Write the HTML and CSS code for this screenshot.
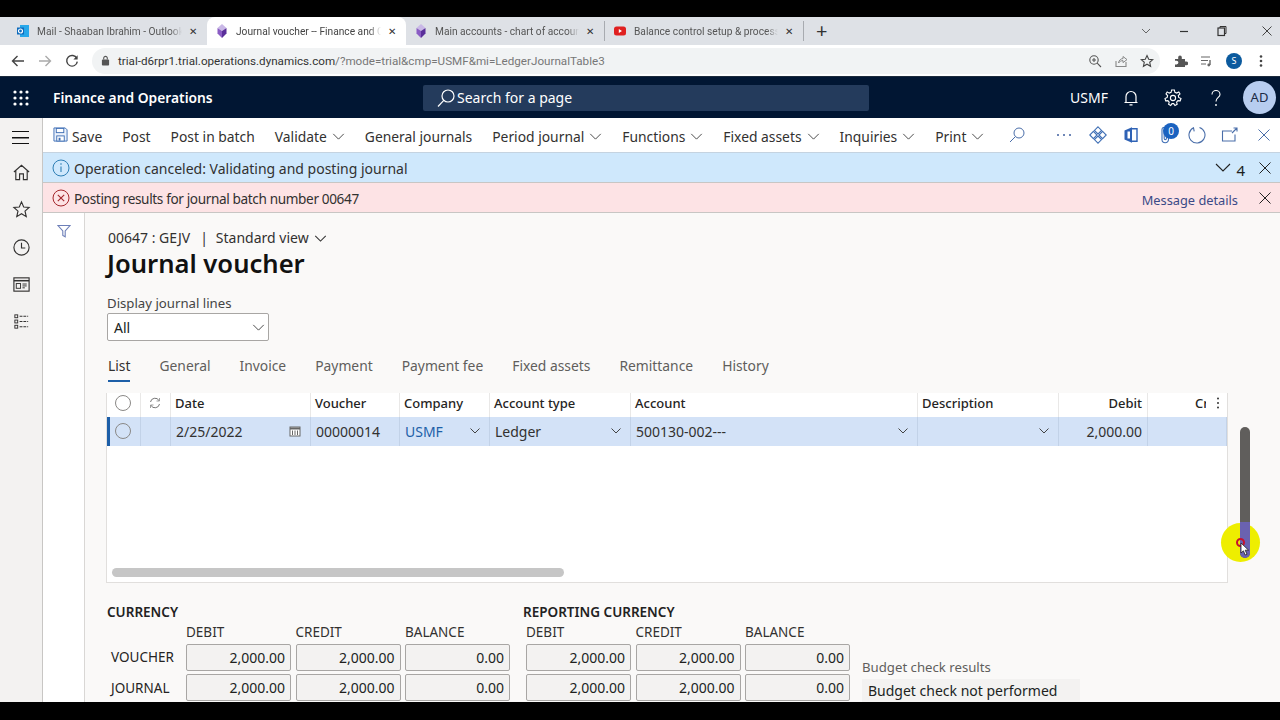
FILE: index.html
```html
<!DOCTYPE html>
<html lang="en">
  <head>
    <meta charset="UTF-8" />
    <title>Journal voucher -- Finance and Operations</title>
    <link rel="stylesheet" href="styles.css">
  </head>
  <body>
    <div class="screen">
      <div class="tabs">
        <div class="tab">
          <svg class="fav" viewBox="0 0 14 14"><rect x="4" y="1" width="9" height="12" fill="#28a8ea"/><rect x="1" y="3.5" width="7" height="7" fill="#0f6cbd"/><circle cx="4.5" cy="7" r="2" fill="none" stroke="#fff" stroke-width="1.2"/></svg>
          <span class="tab-text">Mail - Shaaban Ibrahim - Outlook</span>
          <span class="tab-x">✕</span>
        </div>
        <div class="tab active">
          <svg class="fav" viewBox="0 0 14 14"><path d="M7 0 11.5 4 7 7 2.5 4Z" fill="#c9b8e6"/><path d="M2.5 4 7 7 7 14 2.5 9.5Z" fill="#8a5cc4"/><path d="M11.5 4 7 7 7 14 11.5 9.5Z" fill="#5a2f9a"/></svg>
          <span class="tab-text">Journal voucher -- Finance and Operations</span>
          <span class="tab-x">✕</span>
        </div>
        <div class="tab">
          <svg class="fav" viewBox="0 0 14 14"><path d="M7 0 11.5 4 7 7 2.5 4Z" fill="#c9b8e6"/><path d="M2.5 4 7 7 7 14 2.5 9.5Z" fill="#8a5cc4"/><path d="M11.5 4 7 7 7 14 11.5 9.5Z" fill="#5a2f9a"/></svg>
          <span class="tab-text">Main accounts - chart of accounts</span>
          <span class="tab-x">✕</span>
        </div>
        <div class="tab sep">
          <svg class="fav" viewBox="0 0 14 14"><rect x="1" y="2.5" width="12" height="9" rx="2.5" fill="#e02020"/><path d="M5.8 5 9 7 5.8 9Z" fill="#fff"/></svg>
          <span class="tab-text">Balance control setup &amp; process</span>
          <span class="tab-x">✕</span>
        </div>
        <span class="tab-plus">+</span>
        <div class="win-btns">
          <svg class="i12" viewBox="0 0 12 12"><path d="M2 4 6 8 10 4" fill="none" stroke="#666" stroke-width="1"/></svg>
          <svg class="i12" viewBox="0 0 12 12"><path d="M2 6.5H10" stroke="#333" stroke-width="1.2"/></svg>
          <svg class="i12" viewBox="0 0 12 12"><rect x="2" y="3" width="6.5" height="7.5" fill="none" stroke="#333" stroke-width="1.2"/><path d="M4 3V1.5H10V8.5H8.5" fill="none" stroke="#333"/></svg>
          <svg class="i12 win-close" viewBox="0 0 12 12"><path d="M1.5 1.5 10.5 10.5M10.5 1.5 1.5 10.5" stroke="#444" stroke-width="1"/></svg>
        </div>
      </div>

      <div class="addr">
        <svg class="nav" viewBox="0 0 14 14"><path d="M13 7H2M6.5 2 1.5 7 6.5 12" fill="none" stroke="#444" stroke-width="1.4"/></svg>
        <svg class="nav" viewBox="0 0 14 14"><path d="M1 7H12M7.5 2 12.5 7 7.5 12" fill="none" stroke="#aaa" stroke-width="1.4"/></svg>
        <svg class="nav" viewBox="0 0 14 14"><path d="M11.8 4.4A5.3 5.3 0 1 0 12.3 7.6" fill="none" stroke="#444" stroke-width="1.4"/><path d="M12.6 1.2V5.4H8.4Z" fill="#444"/></svg>
        <div class="url-pill">
          <svg class="lock" viewBox="0 0 10 12"><rect x="1" y="5" width="8" height="6.5" rx="1" fill="#555"/><path d="M3 5V3.4A2 2 0 0 1 7 3.4V5" fill="none" stroke="#555" stroke-width="1.2"/></svg>
          <span class="url"><b>trial-d6rpr1.trial.operations.dynamics.com</b>/?mode=trial&amp;cmp=USMF&amp;mi=LedgerJournalTable3</span>
          <div class="url-icons">
            <svg class="i14" viewBox="0 0 14 14"><circle cx="6" cy="6" r="4.2" fill="none" stroke="#555" stroke-width="1.1"/><path d="M9.2 9.2 13 13M4 6H8M6 4V8" stroke="#555" stroke-width="1.1"/></svg>
            <svg class="i14" viewBox="0 0 14 14"><path d="M2 7V12.5H12V8" fill="none" stroke="#888" stroke-width="1.1"/><path d="M4.5 9C5 6 7 4.6 9 4.6V2.5L13 5.6 9 8.6V6.6C7.4 6.6 5.8 7.2 4.5 9Z" fill="none" stroke="#888"/></svg>
            <svg class="i14" viewBox="0 0 14 14"><path d="M7 1.5 8.7 5.2 12.8 5.6 9.7 8.3 10.6 12.3 7 10.2 3.4 12.3 4.3 8.3 1.2 5.6 5.3 5.2Z" fill="none" stroke="#444" stroke-width="1.1"/></svg>
          </div>
        </div>
        <div class="addr-right">
          <svg class="i14" viewBox="0 0 14 14"><path d="M1 5H4.2V3.2A1.8 1.8 0 0 1 7.8 3.2V5H11V7.6H12.4A1.8 1.8 0 0 1 12.4 11.2H11V13H1V10.4H2.6A1.8 1.8 0 0 0 2.6 6.8H1Z" fill="#555"/></svg>
          <svg class="i14" viewBox="0 0 14 14"><path d="M1 3H10M1 6.5H8M1 10H6" stroke="#666" stroke-width="1.1"/><path d="M10 6V11" stroke="#666" stroke-width="1.4"/><circle cx="8.8" cy="11" r="1.4" fill="#666"/></svg>
          <span class="avatar-s">S</span>
          <svg class="i14" viewBox="0 0 14 14"><circle cx="7" cy="2.5" r="1.3" fill="#444"/><circle cx="7" cy="7" r="1.3" fill="#444"/><circle cx="7" cy="11.5" r="1.3" fill="#444"/></svg>
        </div>
      </div>

      <header class="app-bar">
        <svg class="waffle" viewBox="0 0 16 16" fill="#fff"><circle cx="2" cy="2" r="1.6"/><circle cx="8" cy="2" r="1.6"/><circle cx="14" cy="2" r="1.6"/><circle cx="2" cy="8" r="1.6"/><circle cx="8" cy="8" r="1.6"/><circle cx="14" cy="8" r="1.6"/><circle cx="2" cy="14" r="1.6"/><circle cx="8" cy="14" r="1.6"/><circle cx="14" cy="14" r="1.6"/></svg>
        <div class="app-title">Finance and Operations</div>
        <div class="search">
          <svg class="i20" viewBox="0 0 20 20"><circle cx="12" cy="8" r="6" fill="none" stroke="#fff" stroke-width="1.2"/><path d="M7.8 12.4 2 18.5" stroke="#fff" stroke-width="1.2"/></svg>
          <span>Search for a page</span>
        </div>
        <div class="app-right">
          <span class="usmf">USMF</span>
          <svg class="i18" viewBox="0 0 18 18"><path d="M4 13V7.5A5 5 0 0 1 14 7.5V13M2.5 13.5H15.5M7.5 15.8H10.5" fill="none" stroke="#fff" stroke-width="1.2"/></svg>
          <svg class="i18" viewBox="0 0 18 18"><circle cx="9" cy="9" r="2.6" fill="none" stroke="#fff" stroke-width="1.1"/><path d="M7.6 1H10.4L10.9 3.3 12.7 4.1 14.8 2.9 16 4.9 14.3 6.5 14.7 8.4 17 9.5 16.2 11.8 13.9 11.6 12.6 13.1 13.2 15.3 11 16.5 9.7 14.6H8L6.7 16.5 4.6 15.3 5.2 13.1 3.9 11.6 1.7 11.8 1 9.5 3.2 8.4 3.6 6.5 2 4.9 3.2 2.9 5.2 4.1 7.1 3.3Z" fill="none" stroke="#fff" stroke-width="1.1"/></svg>
          <svg class="i18 help" viewBox="0 0 18 18"><path d="M5 5.5A4 4 0 0 1 13 5.5C13 8.4 9 8.6 9 12.4" fill="none" stroke="#fff" stroke-width="1.1"/><circle cx="9" cy="16" r=".9" fill="#fff"/></svg>
          <span class="avatar-ad">AD</span>
        </div>
      </header>

      <div class="app-body">
        <nav class="rail">
          <svg class="rail-icon" viewBox="0 0 20 20"><path d="M2 9.5 10 2.5 18 9.5M4 8V17.5H8V11.5H12V17.5H16V8" fill="none" stroke="#323130" stroke-width="1.2"/></svg>
          <svg class="rail-icon" viewBox="0 0 20 20"><path d="M10 2 12.3 7.4 18 7.9 13.7 11.7 15 17.5 10 14.4 5 17.5 6.3 11.7 2 7.9 7.7 7.4Z" fill="none" stroke="#323130" stroke-width="1.2"/></svg>
          <svg class="rail-icon" viewBox="0 0 20 20"><circle cx="10" cy="10" r="8" fill="none" stroke="#323130" stroke-width="1.2"/><path d="M10 5V10.5H14" fill="none" stroke="#323130" stroke-width="1.2"/></svg>
          <svg class="rail-icon" viewBox="0 0 20 20"><rect x="2" y="3" width="16" height="14" fill="none" stroke="#323130" stroke-width="1.2"/><path d="M2 6H18" stroke="#323130" stroke-width="1.6"/><rect x="4.5" y="9" width="4.5" height="5" fill="none" stroke="#323130"/><path d="M11 9.5H15.5M11 11.5H15.5M11 13.5H13.5" stroke="#323130"/></svg>
          <svg class="rail-icon" viewBox="0 0 20 20"><path d="M8 4.5H17M8 10H17M8 15.5H17" stroke="#323130" stroke-width="1.1" stroke-dasharray="3 1"/><rect x="3" y="3" width="3" height="3" fill="none" stroke="#323130"/><rect x="3" y="8.5" width="3" height="3" fill="none" stroke="#323130"/><rect x="3" y="14" width="3" height="3" fill="none" stroke="#323130"/></svg>
        </nav>

        <div class="main">
          <div class="actions">
            <svg class="save-icon" viewBox="0 0 16 16"><path d="M1 1H13L15 3V15H1Z" fill="#eaf1fb" stroke="#3f6fb5"/><rect x="3.5" y="1.5" width="8" height="4.5" fill="#fff" stroke="#3f6fb5"/><rect x="4" y="9.5" width="8" height="5.5" fill="#fff" stroke="#3f6fb5"/><rect x="6" y="11.5" width="2" height="3" fill="#3f6fb5"/></svg>
            <span class="act save-label">Save</span>
            <span class="act">Post</span>
            <span class="act">Post in batch</span>
            <span class="act">Validate<svg class="chev" viewBox="0 0 14 8"><path d="M1 1 7 7 13 1" fill="none" stroke="#333"/></svg></span>
            <span class="act">General journals</span>
            <span class="act">Period journal<svg class="chev" viewBox="0 0 14 8"><path d="M1 1 7 7 13 1" fill="none" stroke="#333"/></svg></span>
            <span class="act">Functions<svg class="chev" viewBox="0 0 14 8"><path d="M1 1 7 7 13 1" fill="none" stroke="#333"/></svg></span>
            <span class="act">Fixed assets<svg class="chev" viewBox="0 0 14 8"><path d="M1 1 7 7 13 1" fill="none" stroke="#333"/></svg></span>
            <span class="act">Inquiries<svg class="chev" viewBox="0 0 14 8"><path d="M1 1 7 7 13 1" fill="none" stroke="#333"/></svg></span>
            <span class="act">Print<svg class="chev" viewBox="0 0 14 8"><path d="M1 1 7 7 13 1" fill="none" stroke="#333"/></svg></span>
            <div class="act-icons">
              <svg class="i16" viewBox="0 0 16 16"><circle cx="10" cy="6" r="5" fill="none" stroke="#4a6ea9"/><path d="M6.4 9.6 1 15" stroke="#4a6ea9"/></svg>
              <svg class="dots" viewBox="0 0 18 18" fill="#3f5f9f"><circle cx="3" cy="9" r="1"/><circle cx="9" cy="9" r="1"/><circle cx="15" cy="9" r="1"/></svg>
              <svg class="i18" viewBox="0 0 18 18" fill="none" stroke="#3f6fb5" stroke-width="1.1"><path d="M9 .8 12.6 4.4 9 8 5.4 4.4Z"/><path d="M4.4 5.4 8 9 4.4 12.6 .8 9Z"/><path d="M13.6 5.4 17.2 9 13.6 12.6 10 9Z"/><path d="M9 10 12.6 13.6 9 17.2 5.4 13.6Z"/></svg>
              <svg class="i18" viewBox="0 0 18 18"><path d="M2.5 4.5 10 1.2V16.8L2.5 13.5Z" fill="#2f62b5"/><path d="M5.5 5.5H8V12.5H5.5Z" fill="#fff"/><path d="M10 2.8H15V15.2H10" fill="none" stroke="#2f62b5" stroke-width="1.4"/></svg>
              <div class="clip">
                <svg class="i18" viewBox="0 0 18 18"><path d="M9.5 3V13.5A3.2 3.2 0 0 1 3 13.5V3.5A2.2 2.2 0 0 1 7.4 3.5V12.5A1.1 1.1 0 0 1 5.2 12.5V6" fill="none" stroke="#3f6fb5" stroke-width="1.1"/></svg>
                <span class="clip-badge">0</span>
              </div>
              <svg class="i18" viewBox="0 0 18 18"><path d="M11.5 1.4A8 8 0 1 1 5.5 1.8L6.2 5.4" fill="none" stroke="#4a6ea9" stroke-width="1.1"/></svg>
              <svg class="i18" viewBox="0 0 18 18"><path d="M11 5H1.5V15H14V8.5M11 7 16 2M12.5 2H16V5.5" fill="none" stroke="#4a6ea9" stroke-width="1.1"/></svg>
              <svg class="i14" viewBox="0 0 14 14"><path d="M1.5 1.5 12.5 12.5M12.5 1.5 1.5 12.5" stroke="#4a6ea9"/></svg>
            </div>
          </div>

          <div class="msg msg-info">
            <svg class="i18" viewBox="0 0 18 18"><circle cx="9" cy="9" r="8" fill="none" stroke="#2f7fb5"/><path d="M9 7.5V13" stroke="#2f7fb5" stroke-width="1.1"/><circle cx="9" cy="5" r=".8" fill="#2f7fb5"/></svg>
            <span class="msg-text">Operation canceled: Validating and posting journal</span>
            <div class="msg-right">
              <svg class="chev-m" viewBox="0 0 16 9"><path d="M1 1 8 8 15 1" fill="none" stroke="#222" stroke-width="1.1"/></svg>
              <span class="msg-count">4</span>
              <svg class="i14" viewBox="0 0 14 14"><path d="M1.5 1.5 12.5 12.5M12.5 1.5 1.5 12.5" stroke="#222"/></svg>
            </div>
          </div>
          <div class="msg msg-error">
            <svg class="i18" viewBox="0 0 18 18"><circle cx="9" cy="9" r="8" fill="none" stroke="#a4262c"/><path d="M5.8 5.8 12.2 12.2M12.2 5.8 5.8 12.2" stroke="#a4262c" stroke-width="1.1"/></svg>
            <span class="msg-text">Posting results for journal batch number 00647</span>
            <div class="msg-right">
              <span class="msg-link">Message details</span>
              <svg class="i14" viewBox="0 0 14 14"><path d="M1.5 1.5 12.5 12.5M12.5 1.5 1.5 12.5" stroke="#222"/></svg>
            </div>
          </div>

          <div class="work">
            <aside class="filter-pane">
              <svg class="i14" viewBox="0 0 14 14"><path d="M1 1.5H13L8.2 7V12.8L5.8 11.4V7Z" fill="none" stroke="#6d7fb8" stroke-width="1.1"/></svg>
            </aside>
            <section class="form">
              <div class="crumb">
                <span>00647 : GEJV</span><span class="crumb-bar">|</span><span>Standard view</span>
                <svg class="chev" viewBox="0 0 14 8"><path d="M1 1 7 7 13 1" fill="none" stroke="#333" stroke-width="1.2"/></svg>
              </div>
              <h1 class="title">Journal voucher</h1>
              <label class="field-label">Display journal lines</label>
              <div class="select">All<svg class="chev" viewBox="0 0 14 8"><path d="M1 1 7 7 13 1" fill="none" stroke="#333"/></svg></div>

              <div class="page-tabs">
                <span class="page-tab on">List</span>
                <span class="page-tab">General</span>
                <span class="page-tab">Invoice</span>
                <span class="page-tab">Payment</span>
                <span class="page-tab">Payment fee</span>
                <span class="page-tab">Fixed assets</span>
                <span class="page-tab">Remittance</span>
                <span class="page-tab">History</span>
              </div>

              <div class="grid-row">
                <div class="grid-box">
                  <div class="cols head">
                    <div class="cell center"><span class="radio"></span></div>
                    <div class="cell center"><svg class="i12" viewBox="0 0 12 12"><path d="M1.5 5A4.6 4.6 0 0 1 10 3.5M10.5 7A4.6 4.6 0 0 1 2 8.5" fill="none" stroke="#777"/><path d="M10.5 1V4H7.5M1.5 11V8H4.5" fill="none" stroke="#777" stroke-width=".7"/></svg></div>
                    <div class="cell">Date</div>
                    <div class="cell">Voucher</div>
                    <div class="cell">Company</div>
                    <div class="cell">Account type</div>
                    <div class="cell">Account</div>
                    <div class="cell">Description</div>
                    <div class="cell right">Debit</div>
                    <div class="cell credit"><span class="credit-cut">Credit</span><svg class="kebab" viewBox="0 0 6 14" fill="#333"><circle cx="3" cy="2.5" r="1"/><circle cx="3" cy="7" r="1"/><circle cx="3" cy="11.5" r="1"/></svg></div>
                  </div>
                  <div class="cols line">
                    <div class="cell center first"><span class="radio"></span></div>
                    <div class="cell"></div>
                    <div class="cell between">2/25/2022<svg class="i12" viewBox="0 0 12 12"><rect x="1" y="2" width="10" height="9" fill="#fff" stroke="#666"/><path d="M1 3.5H11" stroke="#666" stroke-width="2"/><path d="M3.5 5.5V10M6 5.5V10M8.5 5.5V10" stroke="#666"/></svg></div>
                    <div class="cell">00000014</div>
                    <div class="cell between"><span class="link">USMF</span><svg class="chev-s" viewBox="0 0 10 6"><path d="M.5 .5 5 5 9.5 .5" fill="none" stroke="#444"/></svg></div>
                    <div class="cell between">Ledger<svg class="chev-s" viewBox="0 0 10 6"><path d="M.5 .5 5 5 9.5 .5" fill="none" stroke="#444"/></svg></div>
                    <div class="cell between">500130-002---<svg class="chev-s" viewBox="0 0 10 6"><path d="M.5 .5 5 5 9.5 .5" fill="none" stroke="#444"/></svg></div>
                    <div class="cell between"><span></span><svg class="chev-s" viewBox="0 0 10 6"><path d="M.5 .5 5 5 9.5 .5" fill="none" stroke="#444"/></svg></div>
                    <div class="cell right">2,000.00</div>
                    <div class="cell"></div>
                  </div>
                  <div class="grid-empty"></div>
                  <div class="hscroll"><div class="hscroll-thumb"></div></div>
                </div>
                <div class="vscroll"><div class="vscroll-on"></div></div>
              </div>

              <div class="totals">
                <div class="tot-head">CURRENCY</div>
                <div class="tot-head tot-second">REPORTING CURRENCY</div>
                <div class="tot-row tot-caps">
                  <span></span><span>DEBIT</span><span>CREDIT</span><span>BALANCE</span><span></span><span>DEBIT</span><span>CREDIT</span><span>BALANCE</span>
                </div>
                <div class="tot-row">
                  <span class="tot-label">VOUCHER</span><span class="amt">2,000.00</span><span class="amt">2,000.00</span><span class="amt">0.00</span><span></span><span class="amt">2,000.00</span><span class="amt">2,000.00</span><span class="amt">0.00</span>
                  <span class="budget-label">Budget check results</span>
                </div>
                <div class="tot-row">
                  <span class="tot-label">JOURNAL</span><span class="amt">2,000.00</span><span class="amt">2,000.00</span><span class="amt">0.00</span><span></span><span class="amt">2,000.00</span><span class="amt">2,000.00</span><span class="amt">0.00</span>
                  <span class="budget-value">Budget check not performed</span>
                </div>
              </div>
            </section>
          </div>
        </div>
      </div>

      <div class="pointer">
        <span class="pointer-ring"></span>
        <svg class="pointer-arrow" viewBox="0 0 10 14"><path d="M1 1V11L3.4 8.8 5.2 13 7 12.2 5.2 8.2H8.6Z" fill="#fff" stroke="#222" stroke-width=".8"/></svg>
      </div>
    </div>
  </body>
</html>
```

FILE: styles.css
```css
* {
  margin: 0;
  padding: 0;
  box-sizing: border-box;
}
html,
body {
  width: 1280px;
  height: 720px;
  overflow: hidden;
  background: #000;
}
body {
  font-family: "Noto Sans", "Open Sans", sans-serif;
  font-size: 14px;
  color: #201f1e;
}
svg {
  display: block;
  flex: none;
}
.i12 { width: 12px; height: 12px; }
.i14 { width: 14px; height: 14px; }
.i16 { width: 16px; height: 16px; }
.i18 { width: 18px; height: 18px; }
.i20 { width: 20px; height: 20px; }

.screen {
  position: relative;
  width: 1280px;
  margin-top: 17px;
  height: 685px;
  display: flex;
  flex-direction: column;
  overflow: hidden;
}

/* browser tabs */
.tabs {
  height: 28px;
  background: #dee1e6;
  display: flex;
  align-items: center;
  padding-left: 8px;
  flex: none;
}
.tab {
  width: 199px;
  height: 28px;
  display: flex;
  align-items: center;
  padding: 0 10px 0 8px;
  gap: 7px;
  font-family: "Roboto", sans-serif;
  font-size: 10.2px;
  color: #555;
}
.tab.active {
  background: #fff;
  border-radius: 8px 8px 0 0;
  color: #444;
}
.tab:nth-child(3) { border-right: 1px solid #a8abb0; height: 20px; }
.tab.sep { border-right: 1px solid #a8abb0; height: 20px; }
.fav {
  width: 14px;
  height: 14px;
}
.tab-text {
  flex: 1;
  white-space: nowrap;
  overflow: hidden;
  -webkit-mask-image: linear-gradient(to right, #000 92%, transparent);
  mask-image: linear-gradient(to right, #000 92%, transparent);
}
.tab-x {
  font-size: 10px;
  color: #333;
}
.tab-plus {
  margin-left: 12px;
  font-size: 20px;
  line-height: 20px;
  color: #333;
}
.win-btns {
  margin-left: auto;
  display: flex;
  align-items: center;
  gap: 26px;
  padding-right: 7px;
}
.win-close { margin-left: 7px; }

/* address bar */
.addr {
  height: 31px;
  background: #fff;
  display: flex;
  align-items: center;
  padding-left: 11px;
  gap: 12px;
  flex: none;
}
.nav {
  width: 14px;
  height: 14px;
  margin-right: 1px;
}
.url-pill {
  width: 1068px;
  height: 26px;
  border-radius: 13px;
  background: #f1f3f4;
  display: flex;
  align-items: center;
  padding: 0 6px 0 9px;
}
.lock {
  width: 9px;
  height: 11px;
  margin-right: 8px;
}
.url {
  font-family: "Roboto", sans-serif;
  font-size: 11.65px;
  color: #777;
  white-space: nowrap;
}
.url b {
  font-weight: 400;
  color: #333;
}
.url-icons {
  margin-left: auto;
  display: flex;
  gap: 12px;
}
.addr-right {
  display: flex;
  align-items: center;
  gap: 12px;
  margin-left: 2px;
}
.avatar-s {
  width: 16px;
  height: 16px;
  border-radius: 50%;
  background: #0b5a9e;
  color: #fff;
  font-size: 9px;
  line-height: 16px;
  text-align: center;
}

/* app header */
.app-bar {
  height: 42px;
  background: #011633;
  border-top: 1px solid #1c2a3c;
  color: #fff;
  display: flex;
  align-items: center;
  flex: none;
}
.waffle {
  width: 16px;
  height: 16px;
  margin-left: 13px;
}
.app-title {
  margin-left: 24px;
  width: 370px;
  font-size: 13.8px;
  font-weight: 600;
}
.search {
  width: 446px;
  height: 26px;
  background: #243b5c;
  border-radius: 2px;
  display: flex;
  align-items: center;
  padding-left: 13px;
  gap: 1px;
  font-size: 14px;
}
.app-right {
  margin-left: auto;
  display: flex;
  align-items: center;
  gap: 24px;
  padding-right: 4px;
}
.usmf {
  font-size: 14px;
  margin-right: -10px;
}
.help { margin-left: 1px; }
.avatar-ad {
  width: 33px;
  height: 33px;
  margin-left: -6px;
  border-radius: 50%;
  background: #b7cdf0;
  color: #1b2a44;
  font-size: 13px;
  line-height: 33px;
  text-align: center;
}

/* page body */
.app-body {
  flex: 1;
  display: flex;
  min-height: 0;
}
.rail {
  width: 43px;
  flex: none;
  background: #f3f2f1;
  border-right: 1px solid #c8c6c4;
  display: flex;
  flex-direction: column;
  align-items: center;
  padding-top: 45px;
  gap: 18.25px;
  position: relative;
}
.rail::before {
  content: "";
  position: absolute;
  top: 13px;
  left: 12px;
  width: 17px;
  height: 11px;
  border-top: 1.5px solid #111;
  border-bottom: 1.5px solid #111;
  background: linear-gradient(#111, #111) center / 100% 1.5px no-repeat;
}
.rail-icon {
  width: 19px;
  height: 19px;
}
.main {
  flex: 1;
  display: flex;
  flex-direction: column;
  min-width: 0;
}

/* action pane */
.actions {
  height: 35px;
  background: #fff;
  border-bottom: 1px solid #c5d3e0;
  display: flex;
  align-items: center;
  padding-left: 10px;
  gap: 20px;
  flex: none;
}
.save-icon {
  width: 15px;
  height: 15px;
  margin-top: -2px;
}
.act {
  display: flex;
  align-items: center;
  gap: 5px;
  margin-top: 2px;
  font-size: 13.85px;
  white-space: nowrap;
  color: #323130;
}
.save-label { margin-left: -16px; }
.chev {
  width: 13px;
  height: 7px;
}
.act-icons {
  margin-left: auto;
  display: flex;
  align-items: center;
  padding-right: 9px;
}
.dots {
  width: 18px;
  height: 18px;
  margin-left: 30px;
}
.act-icons > :nth-child(3) { margin-left: 16px; }
.act-icons > :nth-child(4) { margin-left: 15px; }
.act-icons > :nth-child(5) { margin-left: 19px; }
.act-icons > :nth-child(6) { margin-left: 11px; }
.act-icons > :nth-child(7) { margin-left: 15px; }
.act-icons > :nth-child(8) { margin-left: 18px; }
.clip { position: relative; }
.clip-badge {
  position: absolute;
  top: -3px;
  left: 4px;
  width: 16px;
  height: 16px;
  border-radius: 50%;
  background: #1a62c0;
  color: #fff;
  font-size: 10px;
  line-height: 16px;
  text-align: center;
}

/* message bars */
.msg {
  height: 30px;
  display: flex;
  align-items: center;
  padding-left: 9px;
  gap: 4px;
  border-bottom: 1px solid #c8c6c4;
  flex: none;
}
.msg-info { background: #cfe8fc; }
.msg-error { background: #fde3e5; }
.msg-text {
  color: #323130;
  margin-top: 2px;
}
.msg-error .msg-text {
  font-size: 13.6px;
  letter-spacing: -0.37px;
}
.msg-right {
  margin-left: auto;
  display: flex;
  align-items: center;
  gap: 8px;
  padding-right: 8px;
}
.chev-m {
  width: 16px;
  height: 9px;
  margin-right: -3px;
}
.msg-count {
  font-size: 15px;
  margin: 5px 5px 0 0;
}
.msg-link {
  color: #3b4a87;
  font-size: 12.8px;
  margin: 4px 12px 0 0;
}

/* workspace */
.work {
  flex: 1;
  display: flex;
  min-height: 0;
}
.filter-pane {
  width: 42px;
  flex: none;
  background: #fff;
  border-right: 1px solid #d9d7d5;
  display: flex;
  justify-content: center;
  padding-top: 11px;
}
.form {
  flex: 1;
  background: #faf9f8;
  padding: 15px 0 0 22px;
  min-width: 0;
}
.crumb {
  display: flex;
  align-items: center;
  gap: 7px;
  font-size: 14px;
  line-height: 20px;
  padding-left: 1px;
  color: #323130;
}
.crumb-bar { margin: 0 1px 0 3px; }
.crumb .chev { margin-left: -2px; }
.title {
  font-size: 25.6px;
  font-weight: 600;
  line-height: 31px;
  color: #111;
  margin-bottom: 15px;
}
.field-label {
  display: block;
  font-size: 13.2px;
  line-height: 18px;
  color: #444;
  margin-bottom: 1px;
}
.select {
  width: 162px;
  height: 28px;
  background: #fff;
  border: 1px solid #a8a6a4;
  border-radius: 2px;
  display: flex;
  align-items: center;
  justify-content: space-between;
  padding: 0 3px 0 6px;
  font-size: 14px;
}
.page-tabs {
  display: flex;
  gap: 29px;
  margin-top: 10px;
  padding-left: 1px;
  height: 42px;
  font-size: 13.85px;
  color: #605e5c;
}
.page-tab {
  height: 31px;
  line-height: 29px;
}
.page-tab.on {
  color: #323130;
  border-bottom: 2px solid #1d5fa8;
}

/* grid */
.grid-row {
  display: flex;
  gap: 12px;
  margin-left: -1px;
}
.grid-box {
  width: 1122px;
  height: 190px;
  background: #fff;
  border-right: 1px solid #e1dfdd;
  border-bottom: 1px solid #e1dfdd;
  border-left: 1px solid #e1dfdd;
  display: flex;
  flex-direction: column;
}
.cols {
  display: grid;
  grid-template-columns: 34px 30px 140px 89px 90px 141px 287px 141px 89px 1fr;
}
.cell {
  display: flex;
  align-items: center;
  padding: 0 5px;
  border-right: 1px solid #e9e8e7;
  white-space: nowrap;
  min-width: 0;
  overflow: hidden;
}
.center { justify-content: center; }
.right { justify-content: flex-end; }
.between { justify-content: space-between; }
.head {
  height: 24px;
  font-size: 13px;
  font-weight: 500;
  color: #252423;
}
.head .cell { padding: 0 3px 4px 4px; }
.head .cell.center { padding: 0 4px 4px 3px; }
.head .right { padding-right: 5px; }
.head .credit {
  justify-content: flex-end;
  gap: 9px;
  border-right: 0;
  padding-right: 6px;
}
.credit-cut {
  width: 11px;
  overflow: hidden;
}
.kebab {
  width: 6px;
  height: 14px;
}
.line {
  height: 29px;
  background: #d3e2f7;
  font-size: 14px;
  color: #323130;
}
.line .cell {
  border-right-color: #c2d2e8;
  padding-bottom: 1px;
}
.line .between svg { margin-right: 4px; }
.line .first {
  border-left: 3px solid #1d5fa8;
  padding: 0 7px 1px 3px;
}
.link { color: #1d5fa8; }
.radio {
  width: 16px;
  height: 16px;
  border: 1px solid #8a8886;
  border-radius: 50%;
}
.chev-s {
  width: 10px;
  height: 6px;
}
.grid-empty { flex: 1; }
.hscroll {
  height: 14px;
  padding: 0 5px;
}
.hscroll-thumb {
  width: 452px;
  height: 9px;
  border-radius: 5px;
  background: #c6c6c6;
}
.vscroll {
  position: relative;
  z-index: 1;
  width: 10px;
  height: 131px;
  margin-top: 34px;
  border-radius: 5px;
  background: #605e5c;
  overflow: hidden;
  display: flex;
  align-items: flex-end;
}
.vscroll-on {
  width: 100%;
  height: 36px;
  background: #6a62b0;
}

/* totals */
.totals {
  margin-top: 19px;
  display: grid;
  grid-template-columns: 1fr;
  font-size: 13.5px;
}
.tot-head {
  font-weight: 600;
  line-height: 20px;
  height: 20px;
  color: #222;
  grid-row: 1;
  grid-column: 1;
}
.tot-second { margin-left: 416px; }
.tot-row {
  display: grid;
  grid-template-columns: 74.5px 105px 105px 105px 7px 105px 105px 105px 1fr;
  grid-template-rows: 30.5px;
  column-gap: 4.5px;
  height: 30.5px;
  align-items: center;
}
.tot-caps {
  grid-template-rows: 20px;
  height: 20px;
  color: #323130;
}
.tot-label {
  padding-left: 4px;
  color: #252423;
}
.amt {
  height: 27px;
  line-height: 25px;
  border: 1px solid #a8a6a4;
  border-radius: 2px;
  background: #f3f2f1;
  text-align: right;
  padding-right: 5px;
  font-size: 14px;
}
.budget-label {
  margin: 0 0 -3px 7.5px;
  color: #605e5c;
  align-self: end;
  font-size: 13.2px;
}
.budget-value {
  margin: 6px 0 0 7.5px;
  width: 218px;
  height: 30px;
  line-height: 24px;
  padding-left: 6px;
  align-self: start;
  background: #f3f2f1;
  font-size: 14px;
  color: #201f1e;
}

/* recorder cursor highlight */
.pointer {
  position: absolute;
  left: 1221px;
  top: 506px;
  width: 39px;
  height: 39px;
  border-radius: 50%;
  background: #eeee00;
}
.pointer-ring {
  position: absolute;
  z-index: 2;
  left: 15px;
  top: 15px;
  width: 9px;
  height: 9px;
  border: 2px solid #c8102e;
  border-radius: 50%;
}
.pointer-arrow {
  position: absolute;
  z-index: 2;
  left: 19px;
  top: 19px;
  width: 10px;
  height: 14px;
}
```
